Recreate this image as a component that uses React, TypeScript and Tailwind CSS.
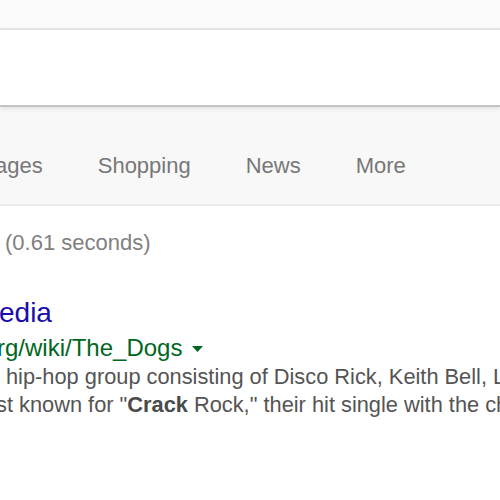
const tabs = ["ages", "Shopping", "News", "More"];

export default function App() {
  return (
    <div className="w-[500px] h-[500px] overflow-hidden bg-white font-['Liberation_Sans',Arial,sans-serif]">
      {/* browser chrome strip */}
      <div className="h-[28px] bg-[#fafafa]" />
      {/* search header */}
      <div className="relative z-10 h-[79px] bg-white border-t-2 border-b-2 border-t-[#e3e3e3] border-b-[#c4c4c4] shadow-[0_2px_4px_rgba(0,0,0,0.09)]" />
      {/* tabs */}
      <div className="h-[99px] bg-[#f8f8f8] border-b-2 border-[#ebebeb]">
        <div className="flex gap-[55px] pt-[46px] ml-[-5px] text-[22px] leading-[26px] text-[#777]">
          {tabs.map(t => (
            <span key={t} className="whitespace-nowrap">{t}</span>
          ))}
        </div>
      </div>

      <div className="pt-[24px] whitespace-nowrap">
        <div className="pl-[5px] text-[22px] leading-[26px] text-[#808080]">(0.61 seconds)</div>

        <div className="mt-[41px] ml-[-1px] text-[28px] leading-[32px] text-[#1a0dab]">edia</div>

        <div className="flex items-center mt-[5px] ml-[-3px] text-[24px] leading-[27px] text-[#006621]">
          <span>rg/wiki/The_Dogs</span>
          <svg width="11" height="6" viewBox="0 0 11 6" className="ml-[10px] mt-[2px]">
            <path d="M0 0H11L5.5 6Z" fill="#006621" />
          </svg>
        </div>

        <div className="mt-[2px] text-[21.8px] leading-[28px] text-[#545454]">
          <div className="ml-[6px]">hip-hop group consisting of Disco Rick, Keith Bell, Lil</div>
          <div className="ml-[-4px]">
            st known for "<b className="font-bold text-[#4a4a4a]">Crack</b> Rock," their hit single with the chorus
          </div>
        </div>
      </div>
    </div>
  );
}
